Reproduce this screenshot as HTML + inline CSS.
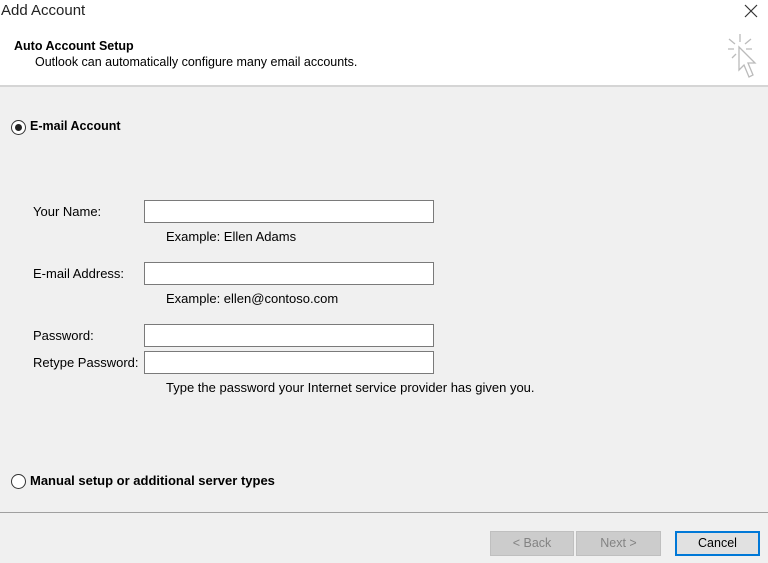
<!DOCTYPE html>
<html><head><style>
body{margin:0;width:768px;height:563px;overflow:hidden;background:#f0f0f0;font-family:"Liberation Sans",sans-serif;font-size:13px;color:#000;position:relative}
.a{position:absolute;white-space:nowrap}
.hdr{position:absolute;left:0;top:0;width:768px;height:85px;background:#fff;border-bottom:2px solid #d5d5d5}
.in{position:absolute;left:144px;width:290px;height:23px;background:#fff;border:1px solid #7a7a7a;box-sizing:border-box}
.rad{position:absolute;width:15px;height:15px;border:1px solid #333;border-radius:50%;box-sizing:border-box;background:#fff}
.btn{position:absolute;top:531px;height:25px;box-sizing:border-box;text-align:center;line-height:23px;font-size:12.5px}
</style></head><body>
<div class="hdr"></div>
<div class="a" style="left:1px;top:2px;font-size:15px;color:#222">Add Account</div>
<svg class="a" style="left:744px;top:4px" width="14" height="14"><path d="M1 1L13 13M13 1L1 13" stroke="#333" stroke-width="1.2"/></svg>
<div class="a" style="left:14px;top:39px;font-weight:bold;font-size:12.5px">Auto Account Setup</div>
<div class="a" style="left:35px;top:55px;font-size:12.5px">Outlook can automatically configure many email accounts.</div>
<svg class="a" style="left:724px;top:32px" width="36" height="50"><g stroke="#bbb" stroke-width="1.3" fill="none"><path d="M16 2V10M5 7L11 12M27 7L21 12M4 17H10M22 17H28M8 26L12 22"/><path d="M15 15L15 38L20 33L25 45L29 43L24 31L31 31Z" fill="#fff"/></g></svg>
<div class="rad" style="left:11px;top:120px"><div style="position:absolute;left:3px;top:3px;width:7px;height:7px;border-radius:50%;background:#222"></div></div>
<div class="a" style="left:30px;top:119px;font-weight:bold;font-size:12.5px">E-mail Account</div>
<div class="a" style="left:33px;top:204px">Your Name:</div>
<div class="in" style="top:200px"></div>
<div class="a" style="left:166px;top:229px">Example: Ellen Adams</div>
<div class="a" style="left:33px;top:266px">E-mail Address:</div>
<div class="in" style="top:262px"></div>
<div class="a" style="left:166px;top:291px">Example: ellen@contoso.com</div>
<div class="a" style="left:33px;top:328px">Password:</div>
<div class="in" style="top:324px"></div>
<div class="a" style="left:33px;top:355px">Retype Password:</div>
<div class="in" style="top:351px"></div>
<div class="a" style="left:166px;top:380px">Type the password your Internet service provider has given you.</div>
<div class="rad" style="left:11px;top:474px"></div>
<div class="a" style="left:30px;top:473px;font-weight:bold;font-size:13px">Manual setup or additional server types</div>
<div class="a" style="left:0;top:512px;width:768px;height:1px;background:#a0a0a0"></div>
<div class="btn" style="left:490px;width:84px;background:#ccc;border:1px solid #bfbfbf;color:#838383">&lt; Back</div>
<div class="btn" style="left:576px;width:85px;background:#ccc;border:1px solid #bfbfbf;color:#838383">Next &gt;</div>
<div class="btn" style="left:675px;width:85px;background:#e1e1e1;border:2px solid #0078d7;line-height:21px">Cancel</div>
</body></html>
